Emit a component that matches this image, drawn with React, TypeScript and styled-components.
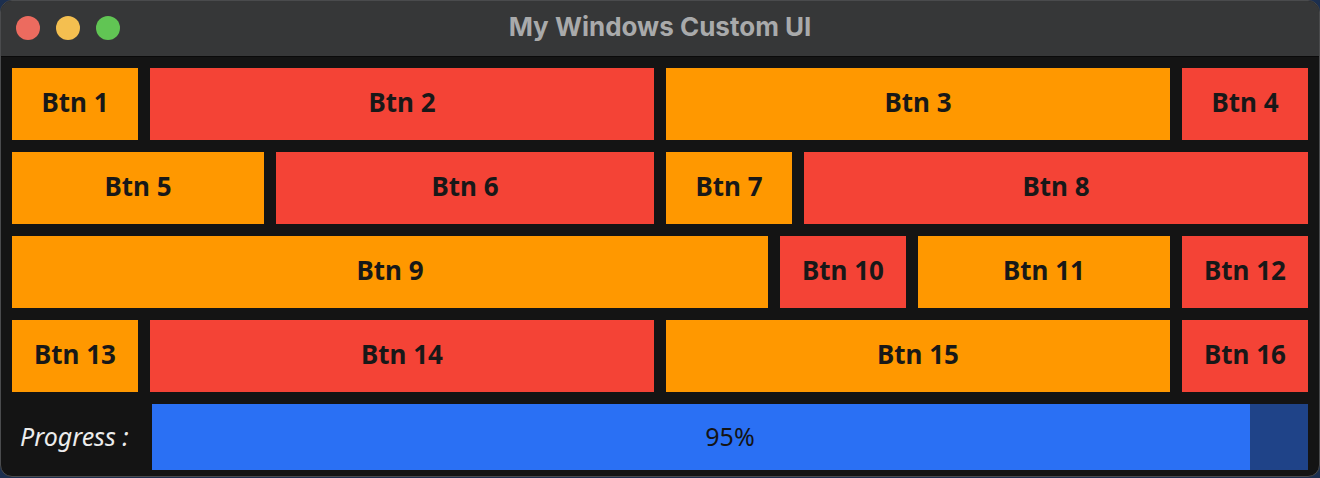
import { createGlobalStyle } from "styled-components";
import styled from "styled-components";

type Tone = "orange" | "red";
type ButtonSpec = { label: string; span: number; tone: Tone };

const rows: ButtonSpec[][] = [
  [
    { label: "Btn 1", span: 1, tone: "orange" },
    { label: "Btn 2", span: 4, tone: "red" },
    { label: "Btn 3", span: 4, tone: "orange" },
    { label: "Btn 4", span: 1, tone: "red" },
  ],
  [
    { label: "Btn 5", span: 2, tone: "orange" },
    { label: "Btn 6", span: 3, tone: "red" },
    { label: "Btn 7", span: 1, tone: "orange" },
    { label: "Btn 8", span: 4, tone: "red" },
  ],
  [
    { label: "Btn 9", span: 6, tone: "orange" },
    { label: "Btn 10", span: 1, tone: "red" },
    { label: "Btn 11", span: 2, tone: "orange" },
    { label: "Btn 12", span: 1, tone: "red" },
  ],
  [
    { label: "Btn 13", span: 1, tone: "orange" },
    { label: "Btn 14", span: 4, tone: "red" },
    { label: "Btn 15", span: 4, tone: "orange" },
    { label: "Btn 16", span: 1, tone: "red" },
  ],
];

const progress = 95;

const GlobalStyle = createGlobalStyle`
  html, body {
    margin: 0;
    padding: 0;
    background: #1c2f4f;
    width: 1320px;
    height: 478px;
    overflow: hidden;
  }
`;

const Window = styled.div`
  width: 1320px;
  height: 477px;
  box-sizing: border-box;
  border-radius: 12px;
  border: 1px solid #4a4b4d;
  background-color: #141414;
  overflow: hidden;
  display: flex;
  flex-direction: column;
`;

const TitleBar = styled.div`
  height: 55px;
  flex: none;
  display: flex;
  align-items: center;
  position: relative;
  background-color: #363738;
  border-bottom: 1px solid #0a0a0a;
`;

const Lights = styled.div`
  display: flex;
  gap: 16px;
  padding-left: 15px;
  margin-top: -2px;
`;

const Light = styled.span<{ $color: string }>`
  width: 24px;
  height: 24px;
  border-radius: 50%;
  background-color: ${({ $color }) => $color};
`;

const Title = styled.div`
  position: absolute;
  left: 0;
  right: 0;
  top: 0;
  bottom: 0;
  display: flex;
  align-items: center;
  justify-content: center;
  padding-bottom: 4px;
  font-family: Inter, "Liberation Sans", sans-serif;
  font-weight: 700;
  font-size: 26px;
  color: #a9aaab;
  pointer-events: none;
`;

const Content = styled.div`
  flex: 1;
  display: flex;
  flex-direction: column;
  gap: 12px;
  padding: 11px 11px 0 11px;
`;

const Row = styled.div`
  display: flex;
  gap: 12px;
  height: 72px;
`;

const GridButton = styled.button<{ $span: number; $tone: Tone }>`
  flex: ${({ $span }) => $span} 1 0;
  min-width: 0;
  border: none;
  margin: 0;
  padding: 0 0 4px 0;
  background-color: ${({ $tone }) => ($tone === "orange" ? "#ff9800" : "#f44336")};
  color: #181818;
  font-family: "Noto Sans", "Open Sans", sans-serif;
  font-weight: 700;
  font-size: 26px;
  display: flex;
  align-items: center;
  justify-content: center;
  cursor: pointer;
`;

const ProgressRow = styled.div`
  display: flex;
  gap: 12px;
  height: 66px;
  align-items: stretch;
`;

const ProgressLabel = styled.div`
  width: 128px;
  flex: none;
  box-sizing: border-box;
  padding-left: 8px;
  display: flex;
  align-items: center;
  font-family: "Noto Sans", "Open Sans", sans-serif;
  font-style: italic;
  font-size: 25px;
  color: #ececec;
  padding-bottom: 2px;
  white-space: nowrap;
`;

const Track = styled.div`
  flex: 1;
  position: relative;
  background-color: #1f4388;
  display: flex;
  align-items: center;
  justify-content: center;
`;

const Fill = styled.div`
  position: absolute;
  left: 0;
  top: 0;
  bottom: 0;
  background-color: #2a70f4;
`;

const Percent = styled.span`
  position: relative;
  font-family: "Noto Sans", "Open Sans", sans-serif;
  font-size: 25px;
  color: #141414;
  padding-bottom: 2px;
`;

export default function App() {
  return (
    <>
      <GlobalStyle />
      <Window>
        <TitleBar>
          <Lights>
            <Light $color="#ec6b5f" />
            <Light $color="#f4bf50" />
            <Light $color="#61c554" />
          </Lights>
          <Title>My Windows Custom UI</Title>
        </TitleBar>
        <Content>
          {rows.map((row, i) => (
            <Row key={i}>
              {row.map((b) => (
                <GridButton key={b.label} $span={b.span} $tone={b.tone}>
                  {b.label}
                </GridButton>
              ))}
            </Row>
          ))}
          <ProgressRow>
            <ProgressLabel>Progress :</ProgressLabel>
            <Track>
              <Fill style={{ width: `${progress}%` }} />
              <Percent>{progress}%</Percent>
            </Track>
          </ProgressRow>
        </Content>
      </Window>
    </>
  );
}
